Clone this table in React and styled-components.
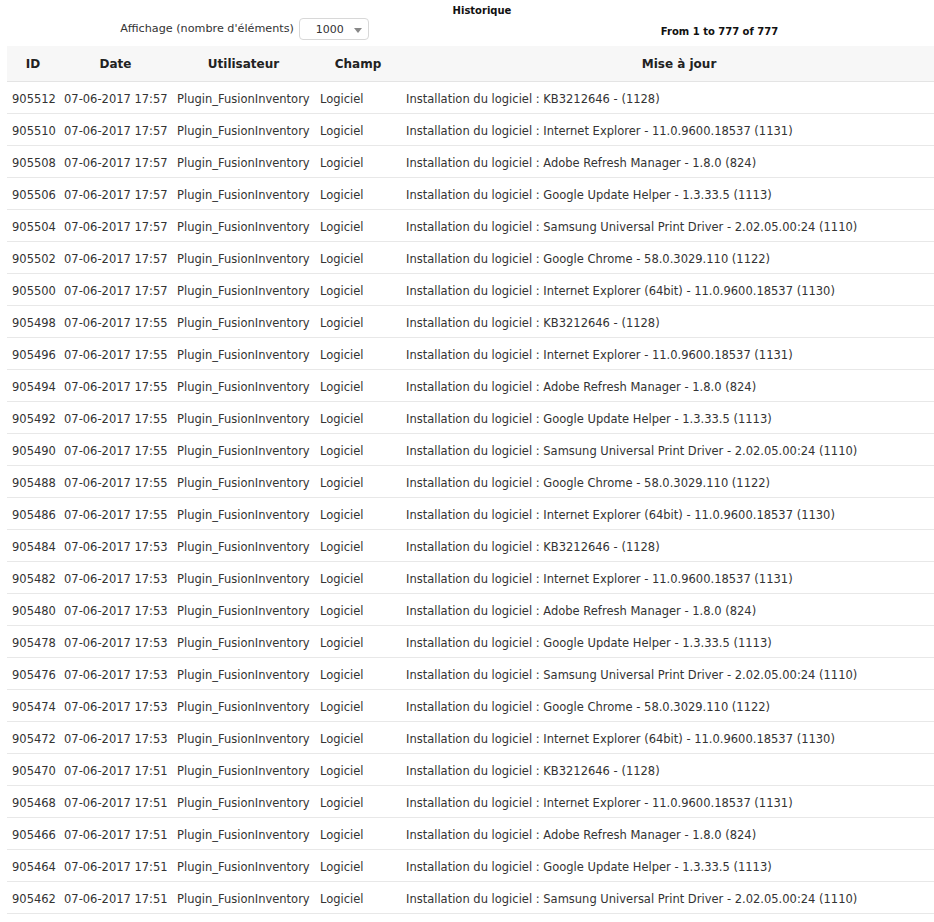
import React from 'react';
import styled, { createGlobalStyle } from 'styled-components';

const GlobalStyle = createGlobalStyle`
  html, body {
    margin: 0;
    padding: 0;
    background: #fff;
    overflow: hidden;
  }
  body {
    font-family: "DejaVu Sans", Verdana, sans-serif;
    color: #333;
  }
`;

const Page = styled.div`
  width: 950px;
  padding: 0 0 0 7px;
`;

const Title = styled.div`
  height: 18px;
  padding-top: 3px;
  box-sizing: border-box;
  line-height: 15px;
  text-align: center;
  font-size: 10px;
  font-weight: bold;
  color: #111;
`;

const Toolbar = styled.div`
  display: grid;
  grid-template-columns: 1fr 1fr;
  height: 28px;
`;

const ToolCell = styled.div`
  display: flex;
  align-items: ${(p) => (p.$bottom ? 'flex-end' : 'flex-start')};
  justify-content: center;
  gap: 5px;
  padding-bottom: ${(p) => (p.$bottom ? '9px' : '0')};
`;

const Label = styled.span`
  font-size: 11.2px;
  line-height: 22px;
  color: #333;
`;

const Select = styled.div`
  width: 70px;
  height: 22px;
  box-sizing: border-box;
  border: 1px solid #d8d8d8;
  border-radius: 4px;
  display: flex;
  align-items: center;
  justify-content: space-between;
  padding: 1px 6px 0 16px;
  font-size: 11px;
  color: #333;
`;

const Arrow = styled.span`
  width: 0;
  height: 0;
  border-left: 4px solid transparent;
  border-right: 4px solid transparent;
  border-top: 5px solid #888;
  margin-top: 1px;
`;

const Pager = styled.span`
  font-size: 10px;
  font-weight: bold;
  color: #111;
`;

const Table = styled.table`
  width: 950px;
  border-collapse: collapse;
  table-layout: fixed;
  font-size: 11.5px;
`;

const HeadCell = styled.th`
  height: 35px;
  padding: 0 5px;
  background: #f7f7f7;
  border-bottom: 1px solid #e4e4e4;
  font-size: 12px;
  font-weight: bold;
  color: #222;
  text-align: center;
`;

const Cell = styled.td`
  height: 29px;
  padding: 2px 5px 0;
  border-bottom: 1px solid #e8e8e8;
  white-space: nowrap;
  color: #333;
`;

const software = [
  'KB3212646 - (1128)',
  'Internet Explorer - 11.0.9600.18537 (1131)',
  'Adobe Refresh Manager - 1.8.0 (824)',
  'Google Update Helper - 1.3.33.5 (1113)',
  'Samsung Universal Print Driver - 2.02.05.00:24 (1110)',
  'Google Chrome - 58.0.3029.110 (1122)',
  'Internet Explorer (64bit) - 11.0.9600.18537 (1130)',
];

const times = ['17:57', '17:55', '17:53', '17:51'];

const rows = Array.from({ length: 26 }, (_, i) => ({
  id: 905512 - i * 2,
  date: `07-06-2017 ${times[Math.floor(i / 7)]}`,
  update: `Installation du logiciel : ${software[i % 7]}`,
}));

const App = () => {
  return (
    <Page>
      <GlobalStyle />
      <Title>Historique</Title>
      <Toolbar>
        <ToolCell>
          <Label>Affichage (nombre d'éléments)</Label>
          <Select>
            1000
            <Arrow />
          </Select>
        </ToolCell>
        <ToolCell $bottom>
          <Pager>From 1 to 777 of 777</Pager>
        </ToolCell>
      </Toolbar>
      <Table>
        <colgroup>
          <col style={{ width: 52 }} />
          <col style={{ width: 113 }} />
          <col style={{ width: 143 }} />
          <col style={{ width: 86 }} />
          <col />
        </colgroup>
        <thead>
          <tr>
            <HeadCell>ID</HeadCell>
            <HeadCell>Date</HeadCell>
            <HeadCell>Utilisateur</HeadCell>
            <HeadCell>Champ</HeadCell>
            <HeadCell>Mise à jour</HeadCell>
          </tr>
        </thead>
        <tbody>
          {rows.map((r) => (
            <tr key={r.id}>
              <Cell>{r.id}</Cell>
              <Cell>{r.date}</Cell>
              <Cell>Plugin_FusionInventory</Cell>
              <Cell>Logiciel</Cell>
              <Cell>{r.update}</Cell>
            </tr>
          ))}
        </tbody>
      </Table>
    </Page>
  );
};

export default App;
